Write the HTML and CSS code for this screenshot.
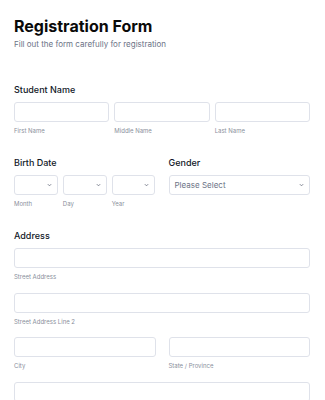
FILE: index.html
```html
<!DOCTYPE html>
<html lang="en">
<head>
    <meta charset="UTF-8">
    <meta name="viewport" content="width=device-width, initial-scale=1.0">
    <title>Registration Form</title>
    <link rel="stylesheet" href="styles.css">
</head>
<body>
    <form class="form">
        <div class="header">
            <h1>Registration Form</h1>
            <p>Fill out the form carefully for registration</p>
        </div>

        <div class="section">
            <label class="label">Student Name</label>
            <div class="row row-3">
                <div class="col">
                    <input type="text" class="input">
                    <span class="sub">First Name</span>
                </div>
                <div class="col">
                    <input type="text" class="input">
                    <span class="sub">Middle Name</span>
                </div>
                <div class="col">
                    <input type="text" class="input">
                    <span class="sub">Last Name</span>
                </div>
            </div>
        </div>

        <div class="section row row-2">
            <div class="col">
                <label class="label">Birth Date</label>
                <div class="row row-3">
                    <div class="col">
                        <div class="select"><span></span><svg viewBox="0 0 6 4"><path d="M1 1l2 2 2-2"/></svg></div>
                        <span class="sub">Month</span>
                    </div>
                    <div class="col">
                        <div class="select"><span></span><svg viewBox="0 0 6 4"><path d="M1 1l2 2 2-2"/></svg></div>
                        <span class="sub">Day</span>
                    </div>
                    <div class="col">
                        <div class="select"><span></span><svg viewBox="0 0 6 4"><path d="M1 1l2 2 2-2"/></svg></div>
                        <span class="sub">Year</span>
                    </div>
                </div>
            </div>
            <div class="col">
                <label class="label">Gender</label>
                <div class="select"><span class="placeholder">Please Select</span><svg viewBox="0 0 6 4"><path d="M1 1l2 2 2-2"/></svg></div>
            </div>
        </div>

        <div class="section">
            <label class="label">Address</label>
            <div class="group">
                <input type="text" class="input">
                <span class="sub">Street Address</span>
            </div>
            <div class="group">
                <input type="text" class="input">
                <span class="sub">Street Address Line 2</span>
            </div>
            <div class="group row row-2">
                <div class="col">
                    <input type="text" class="input">
                    <span class="sub">City</span>
                </div>
                <div class="col">
                    <input type="text" class="input">
                    <span class="sub">State / Province</span>
                </div>
            </div>
            <div class="group">
                <input type="text" class="input">
            </div>
        </div>
    </form>
</body>
</html>
```

FILE: styles.css
```css
body {
    font-family: Inter, "Noto Sans", sans-serif;
    background-color: #ffffff;
    margin: 0;
    padding: 16px 15px 0 14px;
    color: #0a0a0a;
}

.header h1 {
    font-size: 16px;
    font-weight: 700;
    line-height: 20px;
    margin: 0;
}

.header p {
    font-size: 8px;
    line-height: 12px;
    margin: 2px 0 0;
    color: #6c7386;
}

.section {
    margin-top: 33px;
}

.section + .section {
    margin-top: 20px;
}

.label {
    display: block;
    font-size: 9px;
    font-weight: 500;
    line-height: 14px;
    margin-bottom: 5px;
    color: #111827;
}

.row {
    display: grid;
}

.row-3 {
    grid-template-columns: 1fr 1fr 1fr;
    gap: 5px;
}

.row-2 {
    grid-template-columns: 1fr 1fr;
    gap: 13px;
}

.col {
    display: flex;
    flex-direction: column;
    min-width: 0;
}

.group {
    display: flex;
    flex-direction: column;
    margin-bottom: 10.5px;
}

.group.row {
    display: grid;
}

.input,
.select {
    box-sizing: border-box;
    height: 20px;
    width: 100%;
    border: 1px solid #dfe2ea;
    border-radius: 3px;
    background-color: #ffffff;
    margin: 0;
    padding: 0 5px;
    font-family: inherit;
}

.select {
    display: flex;
    align-items: center;
    justify-content: space-between;
}

.select svg {
    width: 5px;
    height: 4px;
    fill: none;
    stroke: #6b7080;
    stroke-width: 1;
}

.placeholder {
    font-size: 8px;
    color: #6c7386;
}

.sub {
    font-size: 6px;
    line-height: 10px;
    margin-top: 4px;
    color: #8a8f9c;
}
```
